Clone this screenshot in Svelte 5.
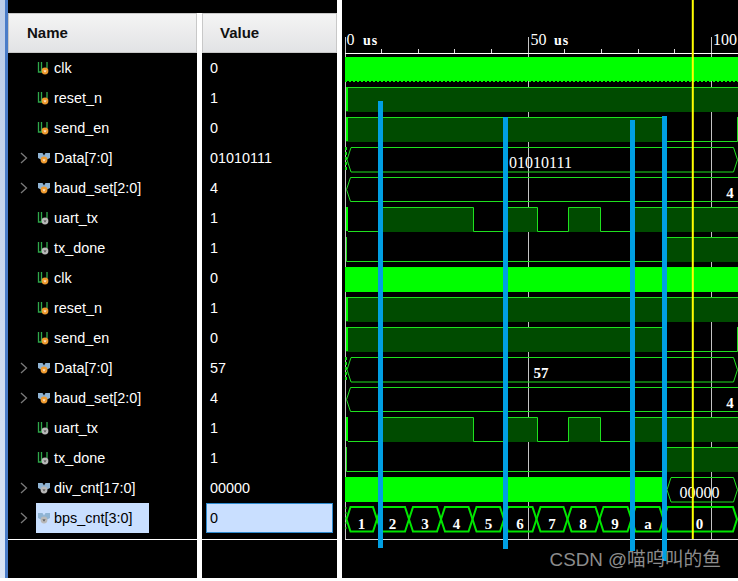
<script>
	// signal list, top to bottom. kind: bit = single wire, bus = vector
	const signals = [
		{ name: 'clk', value: '0', kind: 'bit', tone: 'orange' },
		{ name: 'reset_n', value: '1', kind: 'bit', tone: 'orange' },
		{ name: 'send_en', value: '0', kind: 'bit', tone: 'orange' },
		{ name: 'Data[7:0]', value: '01010111', kind: 'bus', tone: 'orange' },
		{ name: 'baud_set[2:0]', value: '4', kind: 'bus', tone: 'orange' },
		{ name: 'uart_tx', value: '1', kind: 'bit', tone: 'grey' },
		{ name: 'tx_done', value: '1', kind: 'bit', tone: 'grey' },
		{ name: 'clk', value: '0', kind: 'bit', tone: 'orange' },
		{ name: 'reset_n', value: '1', kind: 'bit', tone: 'orange' },
		{ name: 'send_en', value: '0', kind: 'bit', tone: 'orange' },
		{ name: 'Data[7:0]', value: '57', kind: 'bus', tone: 'orange' },
		{ name: 'baud_set[2:0]', value: '4', kind: 'bus', tone: 'orange' },
		{ name: 'uart_tx', value: '1', kind: 'bit', tone: 'grey' },
		{ name: 'tx_done', value: '1', kind: 'bit', tone: 'grey' },
		{ name: 'div_cnt[17:0]', value: '00000', kind: 'bus', tone: 'grey' },
		{ name: 'bps_cnt[3:0]', value: '0', kind: 'bus', tone: 'grey', selected: true }
	];

	const left = 345;
	const right = 738;

	// x is in page pixels, the svg starts at 342
	const ticks = [381.5, 418.5, 454.5, 491.5, 564.5, 601.5, 638.5, 674.5];
	const grid = [345.5, 528.5, 711.5];

	// [top of row, high stretches]
	const uartHigh = [[381, 473.5], [505, 537.5], [568.5, 600.5], [633, 738]];
	const uartRows = [207, 417];

	const bps = [
		[346.5, 377, '1', 361.5], [377, 409, '2', 392.5], [409, 441, '3', 425],
		[441, 472.5, '4', 456.5], [472.5, 504, '5', 488.5], [504, 536.5, '6', 520],
		[536.5, 567.5, '7', 552], [567.5, 599.5, '8', 583], [599.5, 631.5, '9', 615],
		[631.5, 663.5, 'a', 648], [663.5, 737, '0', 699.5]
	];

	const markers = [
		[380.5, 101, 548], [505.5, 117, 549], [632.5, 120, 551], [664.5, 116, 561]
	];

	function uartPath(top) {
		const hi = top + 0.5;
		const lo = top + 24.5;
		let d = `M348 ${lo}`;
		for (const [a, b] of uartHigh) {
			d += ` H${a} V${hi} H${b}`;
			if (b < right) d += ` V${lo}`;
		}
		return d;
	}

	function hex(a, b, top, h = 24.5) {
		const mid = top + h / 2;
		return `M${a} ${mid} L${a + 4} ${top} H${b - 4} L${b} ${mid} L${b - 4} ${top + h} H${a + 4} Z`;
	}
</script>

<div class="screen">
	<div class="strip"></div>

	<div class="lists">
		<div class="topbar"></div>
		<div class="cols">
			<div class="column names">
				<div class="head">Name</div>
				{#each signals as s}
					<div class="row">
						<span class="caret">
							{#if s.kind === 'bus'}
								<svg width="8" height="12" viewBox="0 0 8 12"><path d="M1 1 L6.5 6 L1 11" fill="none" stroke="#7a7a7a" stroke-width="1.3" /></svg>
							{/if}
						</span>
						<span class="label" class:selected={s.selected}>
							{#if s.kind === 'bit'}
								<svg class="icon" width="14" height="14" viewBox="0 0 14 14">
									<path d="M1.5 1 V11 H4.5 V1 M10 1 V7" fill="none" stroke="#2fa84a" stroke-width="1.3" />
									<circle cx="8" cy="10" r="3.4" fill={s.tone === 'orange' ? '#ef9a2e' : '#b9b9b9'} />
									<path d="M7 9 L8 11.2 L9 9" fill="none" stroke={s.tone === 'orange' ? '#fff' : '#444'} stroke-width="0.7" />
								</svg>
							{:else}
								<svg class="icon" width="14" height="14" viewBox="0 0 14 14">
									<path d="M1 2 H5.5 L7 4.5 L8.5 2 H13 V7 L10 8.5 H4 L1 7 Z" fill="#8fb4d4" />
									<circle cx="7" cy="9" r="3.4" fill={s.tone === 'orange' ? '#ef9a2e' : '#b9b9b9'} />
									<path d="M6 8 L7 10.2 L8 8" fill="none" stroke={s.tone === 'orange' ? '#fff' : '#444'} stroke-width="0.7" />
								</svg>
							{/if}
							{s.name}
						</span>
					</div>
				{/each}
				<div class="rule"></div>
			</div>

			<div class="column values">
				<div class="head">Value</div>
				{#each signals as s}
					<div class="row">
						<span class="value" class:selected={s.selected}>{s.value}</span>
					</div>
				{/each}
				<div class="rule"></div>
			</div>
		</div>
	</div>

	<div class="wave">
		<svg width="396" height="578" viewBox="342 0 396 578">
			{#each grid as x}
				<line x1={x} x2={x} y1="37" y2="539" stroke="#c4c4c4" />
			{/each}
			<line x1={left} x2={right} y1="53.5" y2="53.5" stroke="#fff" />
			<line x1={left} x2={right} y1="539.5" y2="539.5" stroke="#ddd" />
			{#each ticks as x}
				<line x1={x} x2={x} y1="49" y2="53" stroke="#ddd" />
			{/each}
			<text class="axis" x="346.5" y="45">0</text>
			<text class="unit" x="363" y="45">us</text>
			<text class="axis" x="530.5" y="45">50</text>
			<text class="unit" x="554" y="45">us</text>
			<text class="axis" x="713" y="45">100</text>

			<!-- clk rows are too dense to show single edges -->
			<rect class="solid" x={left} y="57" width={right - left} height="24" />
			<line x1={left} x2={right} y1="81.5" y2="81.5" stroke="#00ff00" stroke-dasharray="2 2" />
			<rect class="solid" x={left} y="267" width={right - left} height="25" />

			<!-- reset_n, send_en -->
			{#each [87, 297] as y}
				<rect class="fill" x="346" y={y} width="392" height="25" />
				<path class="wire" d={`M346 ${y + 0.5} H${right}`} />
				<rect class="solid" x="346" y={y} width="2" height="24" />
			{/each}
			{#each [117, 327] as y}
				<rect class="fill" x="346" y={y} width="319" height="25" />
				<path class="wire" d={`M346 ${y + 0.5} H665 M664.5 ${y + 24.5} H737.5 V${y}`} />
				<rect class="solid" x="346" y={y} width="2" height="24" />
			{/each}

			<!-- Data -->
			{#each [147, 357] as y}
				<path class="wire" d={hex(347, 737.5, y + 0.5)} />
				<line x1="346" x2="346" y1={y} y2={y + 24} stroke="#1fe01f" stroke-width="2" stroke-dasharray="3 2" />
			{/each}
			<text class="big" x="540.5" y="168" text-anchor="middle">01010111</text>
			<text class="num" x="541" y="378" text-anchor="middle">57</text>

			<!-- baud_set -->
			{#each [177, 387] as y}
				<path class="wire" d={`M${right} ${y + 0.5} H350.5 L346.5 ${y + 12.5} L350.5 ${y + 24.5} H${right}`} />
			{/each}
			<text class="num" x="730" y="198" text-anchor="middle">4</text>
			<text class="num" x="730" y="408" text-anchor="middle">4</text>

			<!-- uart_tx -->
			{#each uartRows as y}
				{#each uartHigh as [a, b]}
					<rect class="fill" x={a} y={y} width={b - a} height="25" />
				{/each}
				<path class="wire" d={uartPath(y)} />
				<rect class="solid" x="346" y={y} width="2" height="24" />
			{/each}

			<!-- tx_done -->
			{#each [237, 447] as y}
				<rect class="fill" x="665" y={y} width={right - 665} height="25" />
				<path class="wire" d={`M346.5 ${y} V${y + 24.5} H665 V${y + 0.5} H${right}`} />
			{/each}

			<!-- div_cnt -->
			<rect class="solid" x={left} y="477" width="320" height="25" />
			<path class="wire" d={hex(667, 737.5, 477.5)} />
			<text class="big" x="699.5" y="497.5" text-anchor="middle">00000</text>

			<!-- bps_cnt -->
			<line x1="346" x2="346" y1="507" y2="531" stroke="#00e600" stroke-dasharray="2 3" />
			{#each bps as [a, b, label, mid]}
				<path class="thick" d={hex(a, b, 507)} />
				<text class="num" x={mid} y="528.5" text-anchor="middle">{label}</text>
			{/each}

			<line x1="692.8" x2="692.8" y1="0" y2="539" stroke="#ffff00" stroke-width="2" />

			{#each markers as [x, y1, y2]}
				<line x1={x} x2={x} {y1} {y2} stroke="#009fe3" stroke-width="5" />
			{/each}
		</svg>
		<span class="mark">CSDN @喵呜叫的鱼</span>
	</div>
</div>

<style>
	:global(body) {
		margin: 0;
		background: #fff;
	}

	.screen {
		display: flex;
		width: 738px;
		height: 578px;
		font-family: "Liberation Sans", Arial, sans-serif;
		font-size: 14.4px;
		overflow: hidden;
	}

	.strip {
		width: 5px;
		flex: none;
		background: linear-gradient(#bccde8, #dae4f4);
		border-right: 3px solid #4a7cc8;
	}

	.lists {
		width: 329px;
		flex: none;
		display: flex;
		flex-direction: column;
		margin-right: 5px;
	}

	.topbar {
		height: 13px;
		background: #000;
	}

	.cols {
		flex: 1;
		display: flex;
		gap: 5px;
	}

	.column {
		background: #000;
	}

	.names {
		width: 189px;
	}

	.values {
		width: 135px;
	}

	.head {
		height: 40px;
		box-sizing: border-box;
		line-height: 38px;
		font-size: 15px;
		font-weight: bold;
		background: linear-gradient(#f4f4f4, #e2e3e5);
		border: 1px solid #c8c8c8;
		color: #111;
	}

	.names .head {
		padding-left: 18px;
	}

	.values .head {
		padding-left: 17px;
	}

	.row {
		height: 30px;
		display: flex;
		align-items: center;
		color: #fff;
	}

	.names .row {
		padding-left: 12px;
	}

	.values .row {
		padding-left: 4px;
	}

	.caret {
		width: 16px;
		flex: none;
		display: flex;
		align-items: center;
	}

	.label {
		display: flex;
		align-items: center;
		gap: 3px;
		height: 30px;
		padding-left: 1px;
	}

	.label.selected {
		background: #c9dfff;
		color: #000;
		width: 113px;
		box-sizing: border-box;
	}

	.value {
		flex: 1;
		height: 30px;
		box-sizing: border-box;
		line-height: 28px;
		padding-left: 3px;
		margin-right: 4px;
		border: 1px solid transparent;
	}

	.value.selected {
		background: #c9dfff;
		border-color: #2e8bd0;
		color: #000;
	}

	.icon {
		flex: none;
	}

	.rule {
		height: 1px;
		background: #fff;
		margin-top: 6px;
	}

	.wave {
		position: relative;
		width: 396px;
		flex: none;
		background: #000;
	}

	.wave svg {
		display: block;
	}

	.solid {
		fill: #00ff00;
	}

	.fill {
		fill: #004b00;
	}

	.wire {
		fill: none;
		stroke: #1fe01f;
		stroke-width: 1;
	}

	.thick {
		fill: none;
		stroke: #00e600;
		stroke-width: 2;
	}

	text {
		fill: #fff;
		font-family: "Liberation Serif", serif;
	}

	.axis {
		font-size: 16px;
	}

	.unit {
		font-size: 14px;
		font-weight: bold;
		letter-spacing: 1px;
	}

	.big {
		font-size: 16px;
	}

	.num {
		font-size: 15px;
		font-weight: bold;
	}

	.mark {
		position: absolute;
		right: 17px;
		bottom: 7px;
		font-family: "Liberation Sans", "Noto Sans CJK SC", sans-serif;
		font-size: 18.8px;
		color: #8c8c8c;
		white-space: nowrap;
	}
</style>
